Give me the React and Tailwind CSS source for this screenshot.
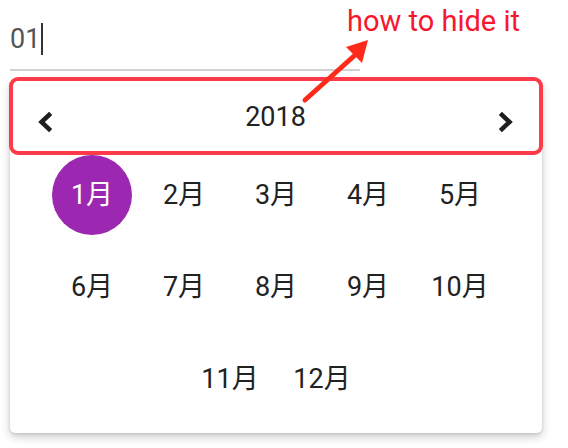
const months = ["1月", "2月", "3月", "4月", "5月", "6月", "7月", "8月", "9月", "10月", "11月", "12月"];

const Chevron = ({ dir }) => (
  <svg width="16" height="22" viewBox="0 0 16 22" className="mt-[8px] shrink-0">
    <polyline
      points={dir === "left" ? "12,4 4.5,11 12,18" : "4,4 11.5,11 4,18"}
      fill="none"
      stroke="#1e1e1e"
      strokeWidth="4.5"
      strokeLinecap="square"
      strokeLinejoin="miter"
    />
  </svg>
);

const App = () => {
  return (
    <div className="relative w-[568px] h-[448px] bg-white overflow-hidden font-['Roboto','Noto_Sans_CJK_SC',sans-serif]">
      {/* input */}
      <div className="pl-[10px] pt-[21px] h-[57px] text-[27px] leading-[36px] text-[#555]">
        <span>01</span>
        <span className="inline-block w-[1.5px] h-[32px] bg-[#333] align-[-7px] ml-[1px]" />
      </div>
      <div className="ml-[10px] mt-[12px] w-[350px] h-[2px] bg-[#d2d2d2]" />

      {/* picker card */}
      <div className="ml-[10px] mt-[9px] w-[532px] bg-white rounded-[5px] pb-[8px] shadow-[0_4px_10px_rgba(0,0,0,0.2),0_1px_3px_rgba(0,0,0,0.12)]">
        <div className="h-[69px] pt-[6px] flex items-center justify-between pl-[27px] pr-[28px]">
          <Chevron dir="left" />
          <span className="text-[27px] text-[#222]">2018</span>
          <Chevron dir="right" />
        </div>
        <div className="flex flex-wrap justify-center px-[36px]">
          {months.map((m, i) => (
            <div key={m} className="w-[92px] h-[92px] flex items-center justify-center">
              {i === 0 ? (
                <div className="w-[80px] h-[80px] rounded-full bg-[#9c27b0] text-white text-[27px] flex items-center justify-center">
                  {m}
                </div>
              ) : (
                <span className="text-[27px] text-[#222]">{m}</span>
              )}
            </div>
          ))}
        </div>
      </div>

      {/* annotation */}
      <div className="absolute left-[9px] top-[77px] w-[534px] h-[78px] border-4 border-[#ff3b4a] rounded-[9px]" />
      <span className="absolute left-[347px] top-[5px] text-[29px] leading-[33px] text-[#f8162e] whitespace-nowrap">
        how to hide it
      </span>
      <svg className="absolute left-0 top-0" width="568" height="448">
        <line x1="305" y1="100" x2="354" y2="56" stroke="#ff2a1a" strokeWidth="5" strokeLinecap="round" />
        <polygon points="368,40 346,47 362,63" fill="#ff2a1a" />
      </svg>
    </div>
  );
};

export default App;
